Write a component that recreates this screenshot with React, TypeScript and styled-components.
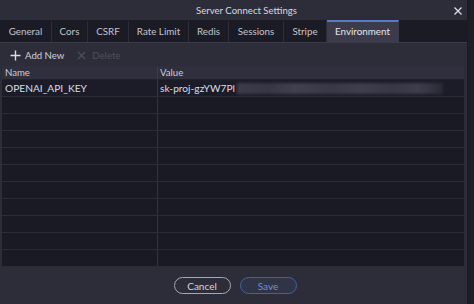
import React from "react";
import styled, { createGlobalStyle } from "styled-components";

const Global = createGlobalStyle`
  html, body { margin: 0; padding: 0; background: #1f1f28; }
  body { font-family: Lato, "Open Sans", sans-serif; overflow: hidden; }
  * { box-sizing: border-box; }
`;

const Screen = styled.div`
  width: 474px;
  height: 304px;
  display: flex;
  background: #1e1e27;
`;

const Dialog = styled.div`
  width: 468px;
  height: 304px;
  background: #2d2d39;
  border-right: 1px solid #1a1a22;
  display: flex;
  flex-direction: column;
`;

const TitleBar = styled.div`
  height: 20px;
  display: flex;
  align-items: center;
  justify-content: center;
  position: relative;
  color: #d8d8e0;
  font-size: 9.6px;
  padding-left: 26px;
`;

const CloseBtn = styled.div`
  position: absolute;
  right: 5px;
  top: 7px;
  width: 8px;
  height: 8px;
  display: flex;
  align-items: center;
  justify-content: center;
`;

const TabBar = styled.div`
  height: 23px;
  display: flex;
  background: #1b1b25;
  border-bottom: 1px solid #3a3a48;
`;

const Tab = styled.div<{ $active?: boolean; $w: number }>`
  width: ${(p) => p.$w}px;
  display: flex;
  align-items: center;
  justify-content: center;
  font-size: 9.8px;
  color: ${(p) => (p.$active ? "#e6e6ee" : "#c4c4ce")};
  background: ${(p) => (p.$active ? "#3b3b4b" : "transparent")};
  border-top: 2px solid ${(p) => (p.$active ? "#5b7cc4" : "transparent")};
  border-right: 1px solid ${(p) => (p.$active ? "transparent" : "#2e2e3a")};
  padding-bottom: 2px;
`;

const Toolbar = styled.div`
  height: 23px;
  display: flex;
  align-items: center;
  padding: 2px 0 0 10px;
  gap: 13px;
`;

const ToolButton = styled.div<{ $disabled?: boolean }>`
  display: flex;
  align-items: center;
  gap: ${(p) => (p.$disabled ? 6 : 4)}px;
  font-size: 9.6px;
  color: ${(p) => (p.$disabled ? "#4e4e5c" : "#cfcfd8")};
`;

const Table = styled.div`
  margin: 0 3px 0 2px;
  flex: 1;
  display: flex;
  flex-direction: column;
  overflow: hidden;
  background: #1a1a24;
`;

const HeaderRow = styled.div`
  height: 18px;
  display: grid;
  grid-template-columns: 156px 1fr;
  background: #2f2f3d;
  border-bottom: 1px solid #22222c;
  font-size: 9.6px;
  color: #cdcdd6;
`;

const HeaderCell = styled.div<{ $first?: boolean }>`
  display: flex;
  align-items: center;
  padding-left: ${(p) => (p.$first ? 3 : 2)}px;
  border-right: ${(p) => (p.$first ? "1px solid #3c3c4a" : "none")};
`;

const Row = styled.div<{ $filled?: boolean }>`
  height: 17px;
  flex-shrink: 0;
  display: grid;
  grid-template-columns: 156px 1fr;
  border-bottom: 1px solid #2b2b37;
  background: ${(p) => (p.$filled ? "#1c1c28" : "#1a1a24")};
  font-size: 10.2px;
  color: #dcdce4;
`;

const Cell = styled.div<{ $first?: boolean }>`
  display: flex;
  align-items: center;
  padding-left: ${(p) => (p.$first ? 3 : 2)}px;
  border-right: ${(p) => (p.$first ? "1px solid #33333f" : "none")};
  position: relative;
  overflow: hidden;
  white-space: nowrap;
`;

const Blur = styled.div`
  width: 206px;
  height: 11px;
  margin-left: 2px;
  background: linear-gradient(
    90deg,
    #3c3c4c 0%,
    #363645 15%,
    #404050 28%,
    #383847 45%,
    #3e3e4e 60%,
    #373746 75%,
    #3d3d4d 88%,
    #2a2a36 100%
  );
  filter: blur(1.5px);
`;

const Footer = styled.div`
  height: 37px;
  display: flex;
  align-items: center;
  justify-content: center;
  gap: 9px;
  padding-left: 3px;
`;

const PillButton = styled.div<{ $primary?: boolean }>`
  width: 57px;
  height: 17px;
  border-radius: 9px;
  display: flex;
  align-items: center;
  justify-content: center;
  font-size: 10px;
  color: ${(p) => (p.$primary ? "#6f8fd8" : "#d6d6de")};
  border: 1px solid ${(p) => (p.$primary ? "#4a5f98" : "#a8a8b4")};
  background: ${(p) => (p.$primary ? "#2f3447" : "transparent")};
`;

const tabs: [string, number][] = [
  ["General", 52],
  ["Cors", 36],
  ["CSRF", 41],
  ["Rate Limit", 60],
  ["Redis", 40],
  ["Sessions", 55],
  ["Stripe", 43],
  ["Environment", 72],
];

export default function App() {
  const emptyRows = Array.from({ length: 10 });
  return (
    <>
      <Global />
      <Screen>
        <Dialog>
          <TitleBar>
            Server Connect Settings
            <CloseBtn>
              <svg width="8" height="8" viewBox="0 0 8 8">
                <path d="M0.5 0.5L7.5 7.5M7.5 0.5L0.5 7.5" stroke="#dcdce4" strokeWidth="1.3" />
              </svg>
            </CloseBtn>
          </TitleBar>
          <TabBar>
            {tabs.map(([t, w]) => (
              <Tab key={t} $w={w} $active={t === "Environment"}>
                {t}
              </Tab>
            ))}
          </TabBar>
          <Toolbar>
            <ToolButton>
              <svg width="11" height="11" viewBox="0 0 11 11">
                <path d="M5.5 0.5V10.5M0.5 5.5H10.5" stroke="#dcdce4" strokeWidth="1.4" />
              </svg>
              Add New
            </ToolButton>
            <ToolButton $disabled>
              <svg width="9" height="9" viewBox="0 0 9 9">
                <path d="M1 1L8 8M8 1L1 8" stroke="#4e4e5c" strokeWidth="1.2" />
              </svg>
              Delete
            </ToolButton>
          </Toolbar>
          <Table>
            <HeaderRow>
              <HeaderCell $first>Name</HeaderCell>
              <HeaderCell>Value</HeaderCell>
            </HeaderRow>
            <Row $filled>
              <Cell $first>OPENAI_API_KEY</Cell>
              <Cell>
                sk-proj-gzYW7Pl
                <Blur />
              </Cell>
            </Row>
            {emptyRows.map((_, i) => (
              <Row key={i}>
                <Cell $first />
                <Cell />
              </Row>
            ))}
          </Table>
          <Footer>
            <PillButton>Cancel</PillButton>
            <PillButton $primary>Save</PillButton>
          </Footer>
        </Dialog>
      </Screen>
    </>
  );
}
